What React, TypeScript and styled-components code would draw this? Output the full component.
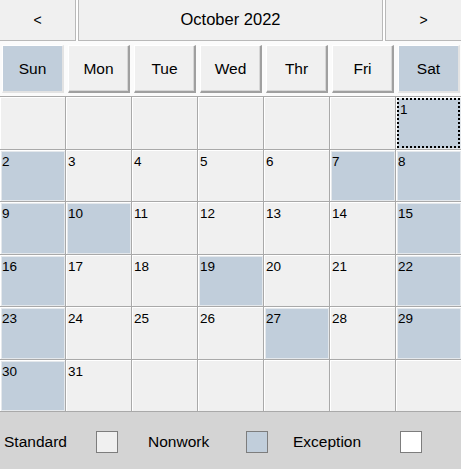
import React from 'react';
import styled, { createGlobalStyle } from 'styled-components';

const GlobalStyle = createGlobalStyle`
  html, body {
    margin: 0;
    padding: 0;
    background: #ffffff;
  }
  body {
    font-family: 'Liberation Sans', Arial, sans-serif;
    color: #000;
    overflow: hidden;
  }
`;

const DAY_NAMES = ['Sun', 'Mon', 'Tue', 'Wed', 'Thr', 'Fri', 'Sat'];
const NONWORK_DAYS = [1, 2, 7, 8, 9, 10, 15, 16, 19, 22, 23, 27, 29, 30];
const FIRST_WEEKDAY = 6; // 1 Oct 2022 is a Saturday
const DAYS_IN_MONTH = 31;
const SELECTED_DAY = 1;

const Frame = styled.div`
  width: 461px;
  height: 469px;
  display: flex;
  flex-direction: column;
  overflow: hidden;
`;

const Nav = styled.div`
  flex: 0 0 42px;
  display: flex;
  gap: 2px;
  margin: -1px -1px 0 -1px;
  background: #ffffff;
`;

const NavButton = styled.div<{ $wide?: boolean }>`
  flex: ${(p) => (p.$wide ? '1 1 auto' : '0 0 75px')};
  display: flex;
  align-items: center;
  justify-content: center;
  background: #f0f0f0;
  border: 1px solid #b9b9b9;
  font-size: ${(p) => (p.$wide ? '16.5px' : '14px')};
  padding-bottom: 1px;
`;

const HeaderRow = styled.div`
  flex: 0 0 55px;
  display: grid;
  grid-template-columns: repeat(7, 1fr);
  column-gap: 1px;
  background: #fbfbfb;
`;

const DayButton = styled.div<{ $weekend?: boolean }>`
  margin: 4px 1px 3px 2px;
  display: flex;
  align-items: center;
  justify-content: center;
  font-size: 15.5px;
  background: ${(p) => (p.$weekend ? '#c1cedb' : '#f0f0f0')};
  border-top: 1px solid #ffffff;
  border-left: 1px solid #ffffff;
  border-right: 2px solid ${(p) => (p.$weekend ? '#e3e3e3' : '#a0a0a0')};
  border-bottom: 2px solid ${(p) => (p.$weekend ? '#e3e3e3' : '#a0a0a0')};
  box-shadow: ${(p) => (p.$weekend ? 'none' : 'inset -1px -1px 0 #d6d6d6')};
`;

const DaysGrid = styled.div`
  flex: 1 1 auto;
  display: grid;
  grid-template-columns: repeat(7, 1fr);
  grid-template-rows: repeat(6, 1fr);
  gap: 1px;
  background: #a9a9a9;
  border-top: 1px solid #a9a9a9;
  border-bottom: 1px solid #a9a9a9;
`;

const DayCell = styled.div<{ $nonwork?: boolean; $selected?: boolean }>`
  background: ${(p) => (p.$nonwork ? '#c1cedb' : '#f0f0f0')};
  border-top: 1px solid #ffffff;
  border-left: 1px solid #ffffff;
  box-shadow: ${(p) => (p.$nonwork ? 'inset 0 0 0 1px #e4e8ec' : 'none')};
  font-size: 13.5px;
  padding: ${(p) => (p.$selected ? '4px 0 0 3px' : '3px 0 0 1px')};
  outline: ${(p) => (p.$selected ? '2px dotted #000' : 'none')};
  outline-offset: -3px;
`;

const Legend = styled.div`
  flex: 0 0 57px;
  display: flex;
  align-items: center;
  padding: 3px 0 0 4px;
  box-sizing: border-box;
  background: #d4d4d4;
  font-size: 15.5px;
`;

const LegendItem = styled.div<{ $after: number }>`
  display: flex;
  align-items: center;
  margin-right: ${(p) => p.$after}px;
`;

const LegendLabel = styled.span<{ $width: number }>`
  width: ${(p) => p.$width}px;
`;

const LegendBox = styled.span<{ $fill: string }>`
  width: 20px;
  height: 20px;
  background: ${(p) => p.$fill};
  border: 1px solid #7d7d7d;
`;

type Cell = { day: number | null };

function buildCells(): Cell[] {
  const cells: Cell[] = [];
  for (let i = 0; i < 42; i++) {
    const day = i - FIRST_WEEKDAY + 1;
    cells.push({ day: day >= 1 && day <= DAYS_IN_MONTH ? day : null });
  }
  return cells;
}

export default function App() {
  const cells = buildCells();

  return (
    <>
      <GlobalStyle />
      <Frame>
        <Nav>
          <NavButton>&lt;</NavButton>
          <NavButton $wide>October 2022</NavButton>
          <NavButton>&gt;</NavButton>
        </Nav>

        <HeaderRow>
          {DAY_NAMES.map((name, i) => (
            <DayButton key={name} $weekend={i === 0 || i === 6}>
              {name}
            </DayButton>
          ))}
        </HeaderRow>

        <DaysGrid>
          {cells.map((c, i) => (
            <DayCell
              key={i}
              $nonwork={c.day !== null && NONWORK_DAYS.includes(c.day)}
              $selected={c.day === SELECTED_DAY}
            >
              {c.day ?? ''}
            </DayCell>
          ))}
        </DaysGrid>

        <Legend>
          <LegendItem $after={30}>
            <LegendLabel $width={92}>Standard</LegendLabel>
            <LegendBox $fill="#f0f0f0" />
          </LegendItem>
          <LegendItem $after={25}>
            <LegendLabel $width={98}>Nonwork</LegendLabel>
            <LegendBox $fill="#c1cedb" />
          </LegendItem>
          <LegendItem $after={0}>
            <LegendLabel $width={107}>Exception</LegendLabel>
            <LegendBox $fill="#ffffff" />
          </LegendItem>
        </Legend>
      </Frame>
    </>
  );
}
